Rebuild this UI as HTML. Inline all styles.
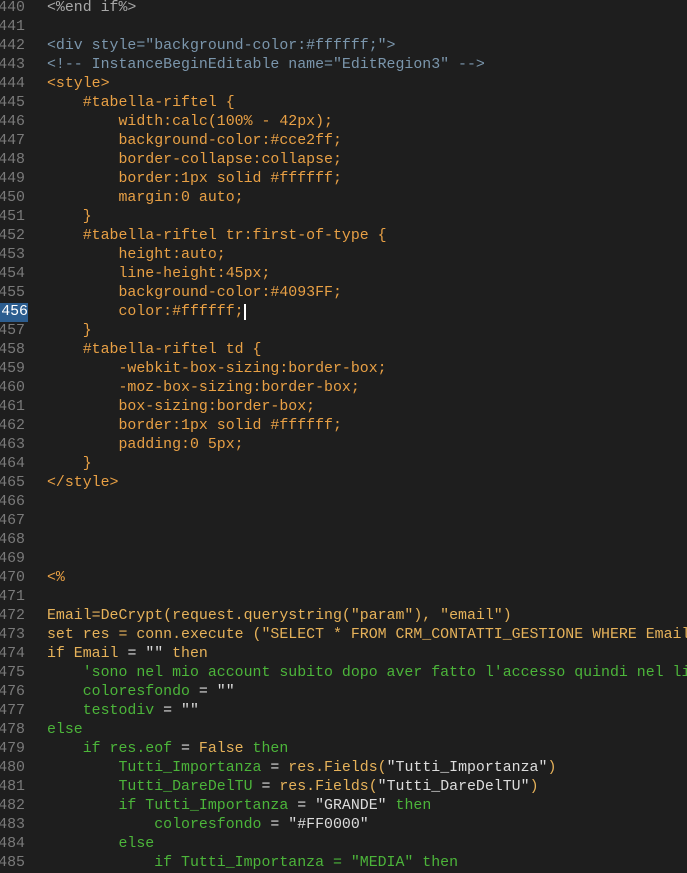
<!DOCTYPE html>
<html><head><style>
body{margin:0;background:#1e1e1e;width:687px;height:857px;overflow:hidden;font-family:"Liberation Mono",monospace;font-size:14.9px;}
.w{position:absolute;top:-1px;left:0;right:0}
.l{height:19px;line-height:19px;white-space:pre;position:relative}
.n{position:absolute;left:-6px;width:31px;text-align:right;color:#7a7a7a;}
.c{position:absolute;left:47px;}
.hl .n{background:#2c5d8f;color:#fff;left:0;width:28px;text-align:right;padding-right:0}
.g{color:#a8a8a8}.b{color:#7b96ac}.o{color:#e8a045}.y{color:#e6b25a}.gr{color:#4cb53a}.w2{color:#dcdcdc}
.cur{border-right:2px solid #fff}
</style></head><body><div class="w">
<div class="l"><span class="n">440</span><span class="c g">&lt;%end if%&gt;</span></div>
<div class="l"><span class="n">441</span></div>
<div class="l"><span class="n">442</span><span class="c b">&lt;div style="background-color:#ffffff;"&gt;</span></div>
<div class="l"><span class="n">443</span><span class="c b">&lt;!-- InstanceBeginEditable name="EditRegion3" --&gt;</span></div>
<div class="l"><span class="n">444</span><span class="c o">&lt;style&gt;</span></div>
<div class="l"><span class="n">445</span><span class="c o">    #tabella-riftel {</span></div>
<div class="l"><span class="n">446</span><span class="c o">        width:calc(100% - 42px);</span></div>
<div class="l"><span class="n">447</span><span class="c o">        background-color:#cce2ff;</span></div>
<div class="l"><span class="n">448</span><span class="c o">        border-collapse:collapse;</span></div>
<div class="l"><span class="n">449</span><span class="c o">        border:1px solid #ffffff;</span></div>
<div class="l"><span class="n">450</span><span class="c o">        margin:0 auto;</span></div>
<div class="l"><span class="n">451</span><span class="c o">    }</span></div>
<div class="l"><span class="n">452</span><span class="c o">    #tabella-riftel tr:first-of-type {</span></div>
<div class="l"><span class="n">453</span><span class="c o">        height:auto;</span></div>
<div class="l"><span class="n">454</span><span class="c o">        line-height:45px;</span></div>
<div class="l"><span class="n">455</span><span class="c o">        background-color:#4093FF;</span></div>
<div class="l hl"><span class="n">456</span><span class="c o">        <span class="cur">color:#ffffff;</span></span></div>
<div class="l"><span class="n">457</span><span class="c o">    }</span></div>
<div class="l"><span class="n">458</span><span class="c o">    #tabella-riftel td {</span></div>
<div class="l"><span class="n">459</span><span class="c o">        -webkit-box-sizing:border-box;</span></div>
<div class="l"><span class="n">460</span><span class="c o">        -moz-box-sizing:border-box;</span></div>
<div class="l"><span class="n">461</span><span class="c o">        box-sizing:border-box;</span></div>
<div class="l"><span class="n">462</span><span class="c o">        border:1px solid #ffffff;</span></div>
<div class="l"><span class="n">463</span><span class="c o">        padding:0 5px;</span></div>
<div class="l"><span class="n">464</span><span class="c o">    }</span></div>
<div class="l"><span class="n">465</span><span class="c o">&lt;/style&gt;</span></div>
<div class="l"><span class="n">466</span></div>
<div class="l"><span class="n">467</span></div>
<div class="l"><span class="n">468</span></div>
<div class="l"><span class="n">469</span></div>
<div class="l"><span class="n">470</span><span class="c o">&lt;%</span></div>
<div class="l"><span class="n">471</span></div>
<div class="l"><span class="n">472</span><span class="c y">Email=DeCrypt(request.querystring("param"), "email")</span></div>
<div class="l"><span class="n">473</span><span class="c y">set res = conn.execute ("SELECT * FROM CRM_CONTATTI_GESTIONE WHERE Email</span></div>
<div class="l"><span class="n">474</span><span class="c y">if Email <span class="w2">=</span> <span class="w2">""</span> then</span></div>
<div class="l"><span class="n">475</span><span class="c gr">    'sono nel mio account subito dopo aver fatto l'accesso quindi nel li</span></div>
<div class="l"><span class="n">476</span><span class="c gr">    coloresfondo <span class="w2">= ""</span></span></div>
<div class="l"><span class="n">477</span><span class="c gr">    testodiv <span class="w2">= ""</span></span></div>
<div class="l"><span class="n">478</span><span class="c gr">else</span></div>
<div class="l"><span class="n">479</span><span class="c gr">    if res.eof <span class="w2">=</span> <span class="y">False</span> then</span></div>
<div class="l"><span class="n">480</span><span class="c gr">        Tutti_Importanza <span class="w2">=</span> <span class="y">res.Fields(<span class="w2">"Tutti_Importanza"</span>)</span></span></div>
<div class="l"><span class="n">481</span><span class="c gr">        Tutti_DareDelTU <span class="w2">=</span> <span class="y">res.Fields(<span class="w2">"Tutti_DareDelTU"</span>)</span></span></div>
<div class="l"><span class="n">482</span><span class="c gr">        if Tutti_Importanza <span class="w2">= "GRANDE"</span> then</span></div>
<div class="l"><span class="n">483</span><span class="c gr">            coloresfondo <span class="w2">= "#FF0000"</span></span></div>
<div class="l"><span class="n">484</span><span class="c gr">        else</span></div>
<div class="l"><span class="n">485</span><span class="c gr">            if Tutti_Importanza = "MEDIA" then</span></div>
</div></body></html>
